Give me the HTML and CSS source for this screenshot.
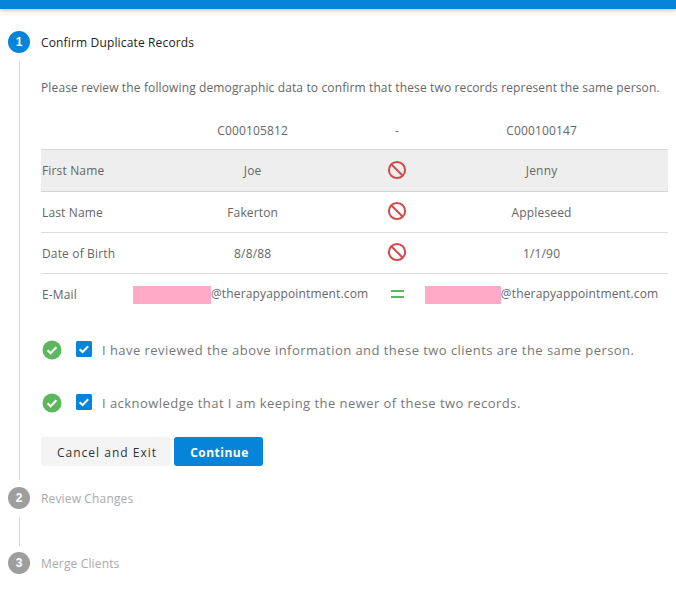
FILE: index.html
```html
<!DOCTYPE html>
<html lang="en">
<head>
<meta charset="utf-8">
<title>Merge Clients</title>
<link rel="stylesheet" href="styles.css">
</head>
<body>
<header class="topbar"></header>
<main class="stepper">
  <section class="step step-active">
    <div class="step-badge">1</div>
    <h2 class="step-title">Confirm Duplicate Records</h2>
    <div class="rail rail-long"></div>
    <div class="step-body">
      <p class="intro">Please review the following demographic data to confirm that these two records represent the same person.</p>
      <table class="compare">
        <thead>
          <tr><th class="c-label"></th><th class="c-val">C000105812</th><th class="c-mid">-</th><th class="c-val">C000100147</th></tr>
        </thead>
        <tbody>
          <tr class="shaded">
            <td class="c-label">First Name</td><td class="c-val">Joe</td>
            <td class="c-mid"><svg class="ban" viewBox="0 0 20 20"><circle cx="10" cy="10" r="8.1"/><path d="M4.3 4.3l11.4 11.4"/></svg></td>
            <td class="c-val">Jenny</td>
          </tr>
          <tr>
            <td class="c-label">Last Name</td><td class="c-val">Fakerton</td>
            <td class="c-mid"><svg class="ban" viewBox="0 0 20 20"><circle cx="10" cy="10" r="8.1"/><path d="M4.3 4.3l11.4 11.4"/></svg></td>
            <td class="c-val">Appleseed</td>
          </tr>
          <tr>
            <td class="c-label">Date of Birth</td><td class="c-val">8/8/88</td>
            <td class="c-mid"><svg class="ban" viewBox="0 0 20 20"><circle cx="10" cy="10" r="8.1"/><path d="M4.3 4.3l11.4 11.4"/></svg></td>
            <td class="c-val">1/1/90</td>
          </tr>
          <tr class="last">
            <td class="c-label">E-Mail</td>
            <td class="c-val email-left"><span class="redact redact-a"></span>@therapyappointment.com</td>
            <td class="c-mid"><span class="equals"></span></td>
            <td class="c-val"><span class="redact redact-b"></span>@therapyappointment.com</td>
          </tr>
        </tbody>
      </table>
      <div class="confirm">
        <svg class="ok" viewBox="0 0 20 20"><circle cx="10" cy="10" r="9.5"/><path d="M5.6 10.3l3 3 5.8-6"/></svg>
        <svg class="box" viewBox="0 0 16 16"><rect width="16" height="16" rx="1.5"/><path d="M3.6 8.2l3 2.8 5.6-5.8"/></svg>
        <span class="confirm-text">I have reviewed the above information and these two clients are the same person.</span>
      </div>
      <div class="confirm">
        <svg class="ok" viewBox="0 0 20 20"><circle cx="10" cy="10" r="9.5"/><path d="M5.6 10.3l3 3 5.8-6"/></svg>
        <svg class="box" viewBox="0 0 16 16"><rect width="16" height="16" rx="1.5"/><path d="M3.6 8.2l3 2.8 5.6-5.8"/></svg>
        <span class="confirm-text">I acknowledge that I am keeping the newer of these two records.</span>
      </div>
      <div class="actions">
        <button class="btn btn-plain" type="button">Cancel and Exit</button>
        <button class="btn btn-primary" type="button">Continue</button>
      </div>
    </div>
  </section>
  <section class="step step-idle">
    <div class="step-badge">2</div>
    <h2 class="step-title">Review Changes</h2>
    <div class="rail rail-short"></div>
    <div class="step-body"></div>
  </section>
  <section class="step step-idle">
    <div class="step-badge">3</div>
    <h2 class="step-title">Merge Clients</h2>
  </section>
</main>
</body>
</html>
```
FILE: styles.css
```css
* { box-sizing: border-box; }
html, body { margin: 0; padding: 0; }
body {
  width: 676px;
  height: 589px;
  overflow: hidden;
  background: #fff;
  font-family: "Open Sans", "Noto Sans", sans-serif;
  font-size: 12px;
  letter-spacing: .15px;
  color: #555;
}
.topbar {
  height: 9px;
  background: #0584d9;
  box-shadow: 0 1px 5px rgba(0,0,0,.3);
}
.stepper { padding: 22px 8px 0 8px; }
.step {
  display: grid;
  grid-template-columns: 22px 1fr;
  column-gap: 11px;
}
.step-badge {
  width: 22px;
  height: 22px;
  border-radius: 50%;
  background: #0584d9;
  color: #fff;
  font-size: 12px;
  font-weight: 700;
  line-height: 22px;
  text-align: center;
  font-family: "Liberation Sans", sans-serif;
  letter-spacing: 0;
}
.step-title {
  margin: 0;
  padding-top: 1px;
  font-size: 12px;
  font-weight: 400;
  line-height: 22px;
  color: #222;
}
.step-idle .step-badge { background: #9e9e9e; }
.step-idle .step-title { color: #aaa; }
.rail {
  width: 1px;
  margin: 7px 0 7px 10.5px;
  background: #d8d8d8;
}
.rail-short { height: 29px; margin-bottom: 6px; }
.step-active .step-body { padding-bottom: 21px; }
.step-body { min-width: 0; }
.intro {
  margin: 25px 0 0;
  line-height: 18px;
  font-size: 12px;
  letter-spacing: .13px;
  color: #666;
  white-space: nowrap;
}
.compare {
  width: 627px;
  margin-top: 16px;
  border-collapse: collapse;
  table-layout: fixed;
}
.compare th, .compare td {
  padding: 0;
  font-weight: 400;
  text-align: center;
  vertical-align: middle;
  white-space: nowrap;
}
.compare th { height: 36px; color: #666; }
.compare td { height: 41px; padding-top: 1px; border-top: 1px solid #ddd; color: #666; }
.compare .c-label { width: 85px; text-align: left; padding-left: 1px; }
.compare .c-val { width: 252px; }
.compare .c-mid { width: 36px; }
.compare .email-left { padding-right: 4px; }
.compare .shaded td { height: 42px; background: #eee; border-top-color: #d9d9d9; border-bottom: 1px solid #d4d4d4; }
.redact { display: inline-block; height: 18px; background: #ffabc8; vertical-align: middle; }
.redact-a { width: 78px; }
.redact-b { width: 76px; }
.ban { display: block; width: 20px; height: 20px; margin: -2px auto 0; fill: none; stroke: #d24a4a; stroke-width: 2; }
.equals {
  display: block;
  width: 13px;
  height: 8px;
  margin: 0 auto;
  border-top: 2px solid #5cb85c;
  border-bottom: 2px solid #5cb85c;
}
.confirm {
  display: flex;
  align-items: center;
  height: 20px;
  margin-top: 33px;
}
.compare + .confirm { margin-top: 26px; }
.ok { width: 20px; height: 20px; flex: none; margin-left: 1px; }
.ok circle { fill: #5cb85c; }
.ok path { fill: none; stroke: #fff; stroke-width: 2; }
.box { width: 16px; height: 16px; flex: none; margin: -2px 0 0 14px; }
.box rect { fill: #0584d9; }
.box path { fill: none; stroke: #fff; stroke-width: 2; }
.confirm-text { margin-left: 10px; color: #777; font-size: 13px; letter-spacing: .45px; }
.actions { display: flex; gap: 3px; margin-top: 24px; }
.btn {
  height: 29px;
  padding: 1px 0 0 2px;
  border: 0;
  border-radius: 3px;
  font-family: inherit;
  font-size: 12px;
  letter-spacing: 1px;
}
.btn-plain { width: 130px; background: #f4f4f4; color: #333; }
.btn-primary { width: 89px; background: #0584d9; color: #fff; font-weight: 700; letter-spacing: .5px; }
```
